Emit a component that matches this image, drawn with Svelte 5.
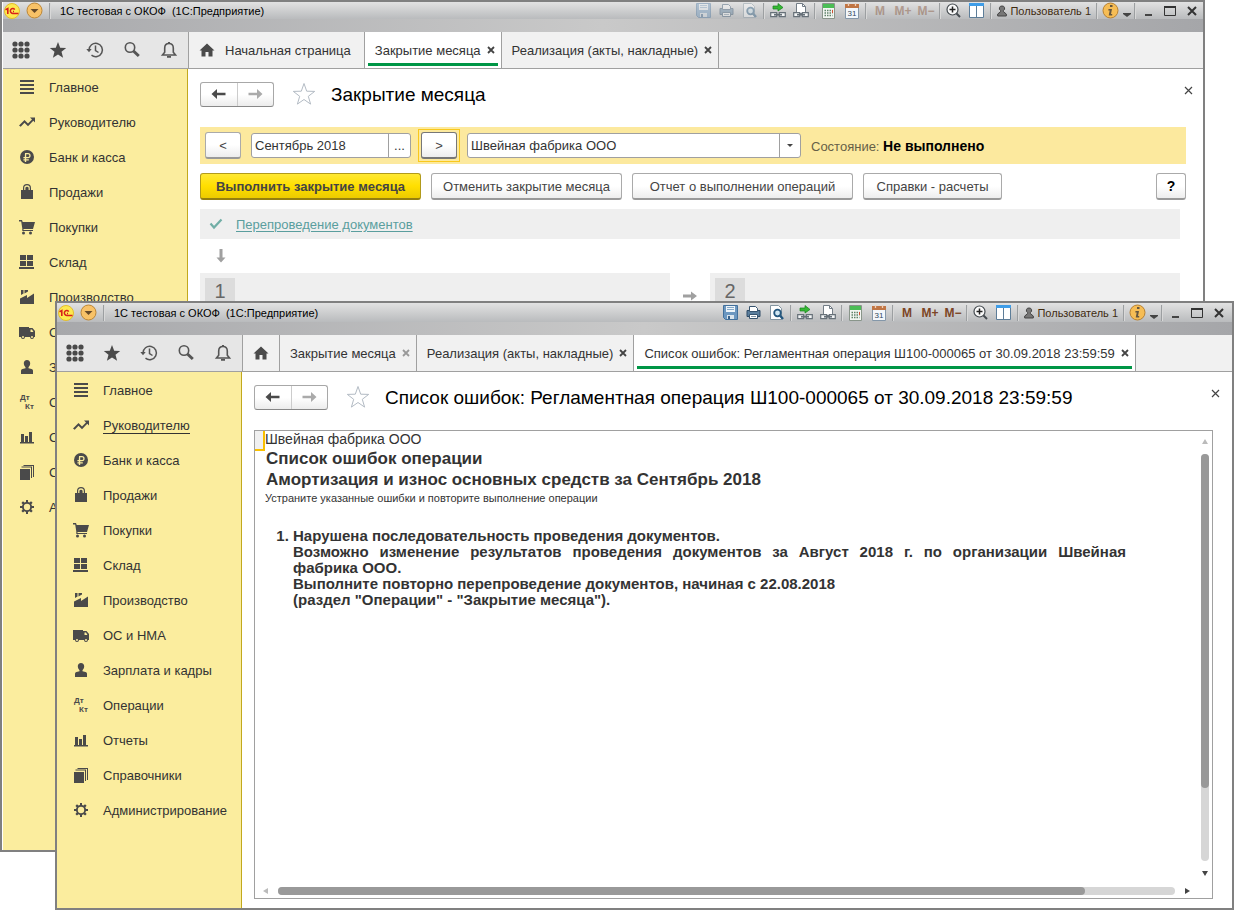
<script>
	const sections = [
		{ title: 'Главное', icon: 'M1 1h14v2H1z M1 5h14v2H1z M1 9h14v2H1z M1 13h14v2H1z' },
		{ title: 'Руководителю', icon: 'M0 11.5L5.5 6l3.5 3.5L13 5.4 11 3.500h5V8.500l-1.700-1.700L9 12.200 5.500 8.800 1.700 12.800z' },
		{ title: 'Банк и касса', icon: 'M8 1a7 7 0 1 0 0 14A7 7 0 1 0 8 1z M6 4h3a2.600 2.600 0 0 1 0 5.200H7.200v1h2.600v1.200H7.200V13H5.800v-1.600H4.400v-1.200h1.400v-1H4.400V8H5.800z M7.200 5.300V8H9a1.300 1.300 0 0 0 0-2.700z' },
		{ title: 'Продажи', icon: 'M2 6h2V4a3.500 3.500 0 0 1 8 0v2h2v9H2z M5.200 6h1.200V3.800a1.700 1.700 0 0 1 3.200 0V6h1.200V4a2.800 2.800 0 0 0-5.600 0z' },
		{ title: 'Покупки', icon: 'M0 1h3l.7 2H16l-2 7H4.500v1H14v1H3.300v-2.500L2.200 2.500H0z M3 14a1.500 1.500 0 1 1 3 0 1.500 1.500 0 1 1-3 0z M10 14a1.500 1.500 0 1 1 3 0 1.500 1.500 0 1 1-3 0z' },
		{ title: 'Склад', icon: 'M1 1h6v5H1z M8 1h6v5H8z M1 7h6v5H1z M8 7h6v5H8z M0 13h15v2H0z' },
		{ title: 'Производство', icon: 'M1 15V9.500L8 6v3l7-4.500V15z M2 1h2.500v3.500L2 6z M5.500 1H9v1.500L5.500 4.500z' },
		{ title: 'ОС и НМА', icon: 'M0 3h10v1h3.500L16 7v6h-1a2 2 0 0 1-4 0H6a2 2 0 0 1-4 0H0z M11.500 5.500V8h3L13 5.500z M3 13a1 1 0 1 0 2 0 1 1 0 1 0-2 0z M12 13a1 1 0 1 0 2 0 1 1 0 1 0-2 0z' },
		{ title: 'Зарплата и кадры', icon: 'M8 1c2 0 3.200 1.400 3.200 3.300 0 1.500-.7 3-1.700 3.900v1.100L12.500 10C13.500 10.300 14 11 14 12v3H2v-3c0-1 .5-1.700 1.500-2l3-.7V8.200C5.500 7.300 4.800 5.800 4.800 4.300 4.800 2.400 6 1 8 1z' },
		{ title: 'Операции', icon: null },
		{ title: 'Отчеты', icon: 'M1 13h14v1.500H1z M2 5h3v8H2z M6 7h3v6H6z M10 3h3v10h-3z' },
		{ title: 'Справочники', icon: 'M1 5h10v11H1z M2.500 2.500h10.500V14h-1V3.500H2.500z M4.500 1H15v12h-1V2H4.500z' },
		{ title: 'Администрирование', icon: 'M7 1h2v2l1.600.6L12 2.200 13.600 3.800 12.300 5.200 13 7h2v2h-2l-.7 1.600 1.400 1.400-1.600 1.600-1.500-1.300L9 13v2H7v-2l-1.600-.7L4 13.600 2.400 12l1.300-1.400L3 9H1V7h2l.7-1.700L2.400 3.900 4 2.300l1.400 1.300L7 3z M8 4.800a3.200 3.200 0 1 0 0 6.400 3.200 3.200 0 1 0 0-6.400z' }
	];

	const backTabs = [
		{ title: 'Начальная страница', home: true },
		{ title: 'Закрытие месяца', active: true, close: true },
		{ title: 'Реализация (акты, накладные)', close: true }
	];

	const frontTabs = [
		{ title: '', home: true },
		{ title: 'Закрытие месяца', close: true, dim: true },
		{ title: 'Реализация (акты, накладные)', close: true },
		{ title: 'Список ошибок: Регламентная операция Ш100-000065 от 30.09.2018 23:59:59', active: true, close: true }
	];

	let period = $state('Сентябрь 2018');
</script>

{#snippet titlebar(inactive)}
	<header class="titlebar">
		<div class="caption">
			<svg class="logo" width="16" height="16" viewBox="0 0 16 16">
				<circle cx="8" cy="8" r="7.500" fill="#fde94f" stroke="#e3bd2c" />
				<path d="M1.500 6.800L3.800 5.500V11" fill="none" stroke="#d8201c" stroke-width="1.600" />
				<path d="M10.700 6.600A2.400 2.400 0 1 0 8.700 10.400H14.500M10 8.600H9" fill="none" stroke="#d8201c" stroke-width="1.500" />
			</svg>
			<button class="system" aria-label="Главное меню">
				<svg width="17" height="17" viewBox="0 0 17 17">
					<circle cx="8.500" cy="8.500" r="7.500" fill="#f8c267" stroke="#bd8634" />
					<path d="M4.500 7h8l-4 4z" fill="#664a28" />
				</svg>
			</button>
			<i class="sep"></i>
			<span class="app">1С тестовая с ОКОФ&nbsp; (1С:Предприятие)</span>
			<div class="tools">
				<div class="group" class:inactive>
					<button aria-label="Сохранить"><svg width="15" height="15" viewBox="0 0 15 15"><path d="M.5.500h14v14H2.500l-2-2z" fill="#6c97c0" stroke="#42709c" /><path d="M3 1h9v6H3z" fill="#eef5fa" /><path d="M4 2.500h7M4 4.500h7" stroke="#86a9c8" /><path d="M4 10h7v4H4z" fill="#dbe5ed" /><path d="M5 11h2v3H5z" fill="#38618a" /></svg></button>
					<button aria-label="Печать"><svg width="15" height="15" viewBox="0 0 15 15"><path d="M1 5.500h13v6H1z" fill="#5b7f9e" stroke="#2e4b66" /><path d="M3.500 1.500h6l2 2v3h-8z" fill="#fff" stroke="#37546f" /><path d="M3.500 9.500h8v4h-8z" fill="#fff" stroke="#37546f" /><path d="M5 11.500h5" stroke="#8195a6" /></svg></button>
					<button aria-label="Предварительный просмотр"><svg width="15" height="15" viewBox="0 0 15 15"><path d="M1.500.500h8l3 3v11h-11z" fill="#fff" stroke="#8495a0" /><circle cx="8.500" cy="8" r="3.300" fill="#d2e8f3" stroke="#24577e" stroke-width="1.800" /><path d="M11 10.500l3 3.500" stroke="#24577e" stroke-width="2.400" /></svg></button>
				</div>
				<i class="sep"></i>
				<div class="group">
					<button aria-label="Перейти по ссылке"><svg width="16" height="16" viewBox="0 0 16 16"><path d="M3 3h5V.500L13 4.500 8 8V6H3z" fill="#36b834" stroke="#17811d" stroke-width=".7" /><path d="M.7 9.700h6v4h-6z M9.300 9.700h6v4h-6z" fill="#f2f4f5" stroke="#667078" stroke-width="1.200" /><path d="M4 11.700h8" stroke="#667078" stroke-width="1.700" /></svg></button>
					<button aria-label="Получить ссылку"><svg width="16" height="16" viewBox="0 0 16 16"><path d="M3.500.500h6l3 3v7h-9z" fill="#fff" stroke="#737d86" /><path d="M9.500.500v3h3" fill="none" stroke="#737d86" /><path d="M.7 9.700h6v4h-6z M9.300 9.700h6v4h-6z" fill="#f2f4f5" stroke="#667078" stroke-width="1.200" /><path d="M4 11.700h8" stroke="#667078" stroke-width="1.700" /></svg></button>
				</div>
				<i class="sep"></i>
				<div class="group">
					<button aria-label="Калькулятор"><svg width="13" height="16" viewBox="0 0 13 16"><path d="M.5.500h12v15H.5z" fill="#f3f6f2" stroke="#89958a" /><path d="M1 1h11v4H1z" fill="#4bbd55" /><path d="M2.500 7.500h8M2.500 10h8M2.500 12.500h8" stroke="#608269" stroke-width="1.400" stroke-dasharray="1.500 1" /><path d="M10.500 7v3" stroke="#d44f31" /></svg></button>
					<button aria-label="Календарь"><svg width="14" height="16" viewBox="0 0 14 16"><path d="M.5 2.500h13v13H.5z" fill="#f3f7fb" stroke="#8497a9" /><path d="M0 1h14v4H0z" fill="#c07544" /><path d="M3.500 0v3M10.500 0v3" stroke="#f0d0b8" stroke-width="1.300" /><text x="7" y="13" text-anchor="middle" font-size="8" fill="#30475e">31</text></svg></button>
				</div>
				<i class="sep"></i>
				<div class="group memory" class:inactive>
					<button>M</button>
					<button>M+</button>
					<button>M−</button>
				</div>
				<i class="sep"></i>
				<div class="group">
					<button aria-label="Масштаб"><svg width="15" height="15" viewBox="0 0 15 15"><circle cx="6.500" cy="6.500" r="5.500" fill="#fafafa" stroke="#454b50" stroke-width="1.200" /><path d="M3.500 6.500h6M6.500 3.500v6" stroke="#222" stroke-width="1.500" /><path d="M10.500 10.500l3.500 3.500" stroke="#454b50" stroke-width="2" /></svg></button>
					<button aria-label="Панели"><svg width="15" height="15" viewBox="0 0 15 15"><path d="M.5 1.500h14v13H.5z" fill="#fff" stroke="#5d7d98" /><path d="M0 0h15v3H0z" fill="#3f9de8" /><path d="M7.500 3v11.500" stroke="#5d7d98" /></svg></button>
				</div>
				<i class="sep"></i>
				<button class="user">
					<svg width="10" height="12" viewBox="0 0 10 12"><path d="M5 1a2.400 2.400 0 0 1 1.400 4.500v1.200L9.300 9v2H.7V9l2.900-2.300V5.500A2.400 2.400 0 0 1 5 1z" fill="#777" stroke="#444" /></svg>
					Пользователь 1
				</button>
				<i class="sep"></i>
				<button aria-label="О программе"><svg width="17" height="17" viewBox="0 0 17 17"><circle cx="8.500" cy="8.500" r="7.500" fill="#f6bd55" stroke="#b88131" /><path d="M8 3h2.500v2H8z M6.500 7H10l-1 5h1.200v1.500H6.700L7.700 8.500H6.300z" fill="#665740" /></svg></button>
				<svg class="caret" width="10" height="14" viewBox="0 0 10 14"><path d="M1 9h8v1L5 13 1 10z" fill="#444" /></svg>
				<i class="sep"></i>
				<button class="frame" aria-label="Свернуть"><svg width="12" height="12" viewBox="0 0 12 12"><path d="M3 9h7v2H3z" fill="#444" /></svg></button>
				<button class="frame" aria-label="Развернуть"><svg width="12" height="12" viewBox="0 0 12 12"><path d="M.5 1.500h11v9H.5z" fill="none" stroke="#333" /><path d="M0 1h12v2H0z" fill="#333" /></svg></button>
				<button class="frame" aria-label="Закрыть"><svg width="12" height="12" viewBox="0 0 12 12"><path d="M2 2l8 8M10 2l-8 8" stroke="#333" stroke-width="2" /></svg></button>
			</div>
		</div>
	</header>
{/snippet}

{#snippet tabbar(tabs)}
	<div class="tabbar">
		<div class="shortcuts">
			<button aria-label="Меню функций"><svg width="18" height="18" viewBox="0 0 18 18" fill="#4a4a4a">{#each [3, 9, 15] as cy}{#each [3, 9, 15] as cx}<circle {cx} {cy} r="2.600" />{/each}{/each}</svg></button>
			<button aria-label="Избранное"><svg width="18" height="18" viewBox="0 0 18 18"><path d="M9 1l2.200 5.700 6 .3-4.700 3.800 1.600 5.900L9 13.400l-5.100 3.300 1.600-5.900L.8 7l6-.3z" fill="#4a4a4a" /></svg></button>
			<button aria-label="История"><svg width="18" height="18" viewBox="0 0 18 18" fill="none" stroke="#555" stroke-width="1.500"><path d="M3 9a6.700 6.700 0 1 1 2.500 5.200M9.500 4.500v5l3 2" /><path d="M.3 8h5.400L3 11.300z" fill="#555" stroke="none" /></svg></button>
			<button aria-label="Поиск"><svg width="18" height="18" viewBox="0 0 18 18" fill="none" stroke="#555"><circle cx="7" cy="6.500" r="4.700" stroke-width="1.600" /><path d="M10.500 10l5.300 5" stroke-width="3" /></svg></button>
			<button aria-label="Оповещения"><svg width="18" height="18" viewBox="0 0 18 18"><path d="M2.500 14h13l-2.200-2.700V7c0-3-1.800-4.500-4.300-4.500S4.700 4 4.700 7v4.300z" fill="none" stroke="#555" stroke-width="1.600" /><path d="M8 1h2v2H8z M7 15h4v1.700H7z" fill="#555" /></svg></button>
		</div>
		<nav class="tabs">
			{#each tabs as tab}
				<div class="tab" class:active={tab.active} class:start={tab.home}>
					<button class="name" aria-label={tab.title || 'Начальная страница'}>
						{#if tab.home}
							<svg width="16" height="14" viewBox="0 0 16 14"><path d="M8 0.500L15.500 7.500H13.500V13.500H9.500V9H6.500v4.500H2.500V7.500H.5z" fill="#4a4a4a" /></svg>
						{/if}
						{#if tab.title}<span>{tab.title}</span>{/if}
					</button>
					{#if tab.close}
						<button class="close" class:dim={tab.dim} aria-label="Закрыть вкладку"><svg width="8" height="8" viewBox="0 0 8 8"><path d="M1 1l6 6M7 1L1 7" stroke="currentColor" stroke-width="1.800" /></svg></button>
					{/if}
				</div>
			{/each}
		</nav>
	</div>
{/snippet}

{#snippet sidebar(hovered)}
	<nav class="sidebar">
		{#each sections as section}
			<a href="#section" class:hovered={section.title === hovered}>
				<svg width="16" height="16" viewBox="0 0 16 16">
					{#if section.icon}
						<path d={section.icon} fill="#4a4a4a" fill-rule="evenodd" />
					{:else}
						<text x="1" y="6" class="dtkt">Дт</text>
						<text x="6" y="15" class="dtkt">Кт</text>
					{/if}
				</svg>
				<span>{section.title}</span>
			</a>
		{/each}
	</nav>
{/snippet}

{#snippet heading(title)}
	<div class="heading">
		<div class="history">
			<button aria-label="Назад"><svg width="15" height="12" viewBox="0 0 15 12"><path d="M.5 6L6 1v3.700h8.500v2.600H6V11z" fill="#4a4a4a" /></svg></button>
			<button aria-label="Вперед"><svg width="15" height="12" viewBox="0 0 15 12"><path d="M14.500 6L9 1v3.700H.5v2.600H9V11z" fill="#aaa" /></svg></button>
		</div>
		<button class="star" aria-label="В избранное"><svg width="24" height="24" viewBox="0 0 24 24"><path d="M12 1.500l2.700 7.700 8 .2-6.400 4.900 2.300 7.800L12 17.500l-6.600 4.600 2.300-7.800L1.300 9.400l8-.2z" fill="#fff" stroke="#b3bbc4" /></svg></button>
		<h1>{title}</h1>
		<button class="dismiss" aria-label="Закрыть"><svg width="9" height="9" viewBox="0 0 9 9"><path d="M1 1l7 7M8 1L1 8" stroke="#444" stroke-width="1.200" /></svg></button>
	</div>
{/snippet}

<main>
	<section class="window back">
		{@render titlebar(true)}
		{@render tabbar(backTabs)}
		<div class="body">
			{@render sidebar()}
			<div class="content">
				{@render heading('Закрытие месяца')}
				<div class="filter">
					<button class="btn step">&lt;</button>
					<div class="field period">
						<input aria-label="Период" bind:value={period}>
						<button aria-label="Выбрать период">...</button>
					</div>
					<button class="btn step focused">&gt;</button>
					<div class="field company">
						<select aria-label="Организация">
							<option>Швейная фабрика ООО</option>
						</select>
						<i class="arrow"></i>
					</div>
					<span class="state">Состояние: <b>Не выполнено</b></span>
				</div>
				<div class="commands">
					<button class="btn primary">Выполнить закрытие месяца</button>
					<button class="btn cancel">Отменить закрытие месяца</button>
					<button class="btn report">Отчет о выполнении операций</button>
					<button class="btn notes">Справки - расчеты</button>
					<button class="btn help">?</button>
				</div>
				<div class="repost">
					<svg width="14" height="12" viewBox="0 0 14 12"><path d="M1.500 5.500L5 9.500 12.500 1.500" fill="none" stroke="#71aea6" stroke-width="2.200" /></svg>
					<a href="#repost">Перепроведение документов</a>
				</div>
				<svg class="down" width="10" height="14" viewBox="0 0 10 14"><path d="M3.500 0h3v8.500H9.500L5 13.500.5 8.500h3z" fill="#a0a0a0" /></svg>
				<div class="stages">
					<div class="stage"><b>1</b></div>
					<svg width="14" height="10" viewBox="0 0 14 10"><path d="M0 3.500h8V.500L14 5 8 9.500v-3H0z" fill="#a0a0a0" /></svg>
					<div class="stage"><b>2</b></div>
				</div>
			</div>
		</div>
	</section>

	<section class="window front">
		{@render titlebar(false)}
		{@render tabbar(frontTabs)}
		<div class="body">
			{@render sidebar('Руководителю')}
			<div class="content">
				{@render heading('Список ошибок: Регламентная операция Ш100-000065 от 30.09.2018 23:59:59')}
				<div class="sheet">
					<div class="cell"></div>
					<article>
						<p class="firm">Швейная фабрика ООО</p>
						<h2>Список ошибок операции</h2>
						<h2>Амортизация и износ основных средств за Сентябрь 2018</h2>
						<p class="hint">Устраните указанные ошибки и повторите выполнение операции</p>
						<ol>
							<li>
								<p>Нарушена последовательность проведения документов.</p>
								<p>Возможно изменение результатов проведения документов за Август 2018 г. по организации Швейная фабрика&nbsp;ООО.</p>
								<p>Выполните повторно перепроведение документов, начиная с 22.08.2018</p>
								<p>(раздел "Операции" - "Закрытие месяца").</p>
							</li>
						</ol>
					</article>
					<div class="vscroll">
						<svg width="6" height="5" viewBox="0 0 6 5"><path d="M3 0l3 5H0z" fill="#bbb" /></svg>
						<div class="track"><div class="thumb"></div></div>
						<svg width="6" height="5" viewBox="0 0 6 5"><path d="M0 0h6L3 5z" fill="#444" /></svg>
					</div>
					<div class="hscroll">
						<svg width="5" height="6" viewBox="0 0 5 6"><path d="M5 0v6L0 3z" fill="#bbb" /></svg>
						<div class="track"><div class="thumb"></div></div>
						<svg width="5" height="6" viewBox="0 0 5 6"><path d="M0 0l5 3-5 3z" fill="#444" /></svg>
					</div>
				</div>
			</div>
		</div>
	</section>
</main>

<style>
	:global(body) {
		background: #fff;
		font-family: "Liberation Sans", Arial, sans-serif;
		font-size: 13px;
		color: #333;
	}

	main {
		position: relative;
		height: 100vh;
		min-height: 700px;
		overflow: hidden;
	}

	main :global(*) {
		box-sizing: border-box;
	}

	button, input, select {
		font: inherit;
		color: inherit;
		margin: 0;
		padding: 0;
		border: none;
		background: none;
	}

	svg {
		display: block;
		flex: none;
	}

	p, h1, h2, ol {
		margin: 0;
		padding: 0;
	}

	/* windows */
	.window {
		position: absolute;
		display: flex;
		flex-direction: column;
		overflow: hidden;
		border: 2px solid #808080;
		background: #fff;
	}

	.back {
		left: 0;
		right: 32px;
		top: 0;
		bottom: 60px;
		padding-left: 1px;
	}

	.front {
		left: 55px;
		right: 3px;
		top: 301px;
		bottom: 2px;
	}

	/* title bar */
	.titlebar {
		flex: none;
		height: 32px;
		background: linear-gradient(90deg, #a7a8ab, #c9c9c9 50%, #a5a6a9);
	}

	.back .titlebar {
		height: 30px;
	}

	.caption {
		display: flex;
		align-items: center;
		height: 19px;
		padding: 0 2px 0 1px;
		background: linear-gradient(#e2e2e2, #b9bbbd);
		color: #000;
		font-size: 11px;
	}

	.back .caption {
		height: 17px;
		padding-right: 0;
	}

	.system {
		margin: 0 4px 0 6px;
	}

	.sep {
		flex: none;
		width: 1px;
		height: 16px;
		margin: 0 2px;
		background: #9c9fa1;
		box-shadow: 1px 0 #d8d8d8;
	}

	.app {
		margin-left: 8px;
		white-space: nowrap;
	}

	.tools, .group {
		display: flex;
		align-items: center;
	}

	.tools {
		margin-left: auto;
	}

	.tools button {
		display: flex;
		align-items: center;
		justify-content: center;
		width: 23px;
		height: 17px;
	}

	.group.inactive {
		opacity: 0.4;
	}

	.tools .memory button {
		color: #7c4526;
		font-size: 12px;
		font-weight: bold;
	}

	.tools .user {
		width: auto;
		gap: 3px;
		padding: 0 3px 0 4px;
		color: #402b10;
		white-space: nowrap;
	}

	.tools .frame {
		width: 22px;
	}

	/* tab bar */
	.tabbar {
		display: flex;
		flex: none;
		height: 37px;
		border-bottom: 1px solid #a0a0a0;
		background: #f1f1f1;
	}

	.shortcuts {
		display: flex;
		flex: none;
		align-items: center;
		justify-content: space-between;
		width: 186px;
		padding: 0 10px 0 9px;
		border-right: 1px solid #a0a0a0;
		background: #e6e6e6;
	}

	.tabs {
		display: flex;
	}

	.tab {
		display: flex;
		align-items: center;
		padding: 0 6px 0 10px;
		border-right: 1px solid #a0a0a0;
		white-space: nowrap;
	}

	.tab.start {
		padding-right: 10px;
	}

	.back .tab.start {
		padding-right: 13px;
	}

	.tab.active {
		background: linear-gradient(#009646, #009646) center bottom 2px / calc(100% - 6px) 3px no-repeat #fff;
	}

	.name {
		display: flex;
		align-items: center;
		gap: 10px;
	}

	.close {
		margin-left: 6px;
		color: #444;
	}

	.close.dim {
		color: #999;
	}

	/* sections */
	.body {
		display: flex;
		flex: 1;
		min-height: 0;
	}

	.sidebar {
		flex: none;
		width: 185px;
		border-right: 1px solid #c2a91d;
		background: #fbed9e;
		overflow: hidden;
	}

	.sidebar a {
		display: flex;
		align-items: center;
		gap: 14px;
		height: 35px;
		padding: 1px 0 0 16px;
		color: #333;
		text-decoration: none;
		white-space: nowrap;
	}

	.sidebar .hovered span {
		border-bottom: 1px solid #333;
		margin-bottom: -1px;
	}

	.dtkt {
		font-size: 8px;
		font-weight: bold;
		fill: #4a4a4a;
	}

	.content {
		display: flex;
		flex: 1;
		flex-direction: column;
		min-width: 0;
		padding: 12px 19px 9px 12px;
	}

	/* form heading */
	.heading {
		display: flex;
		flex: none;
		align-items: center;
		height: 26px;
	}

	.history {
		display: flex;
		width: 74px;
		height: 25px;
		border: 1px solid #a8a8a8;
		border-bottom-color: #888;
		border-radius: 3px;
		background: linear-gradient(#fff 50%, #ececec);
	}

	.history button {
		display: flex;
		flex: 1;
		align-items: center;
		justify-content: center;
	}

	.history button + button {
		border-left: 1px solid #ccc;
	}

	.star {
		margin: 0 15px 0 18px;
	}

	h1 {
		padding-top: 2px;
		color: #000;
		font-size: 19px;
		font-weight: normal;
		line-height: 24px;
		white-space: nowrap;
	}

	.dismiss {
		margin: 0 -7px 8px auto;
	}

	/* month closing */
	.back .content {
		padding-right: 17px;
	}

	.filter {
		display: flex;
		flex: none;
		align-items: center;
		gap: 10px;
		height: 37px;
		margin-top: 20px;
		padding: 0 5px;
		background: #fce99e;
	}

	.btn {
		height: 27px;
		border: 1px solid #aaa;
		border-bottom: 2px solid #999;
		border-radius: 3px;
		background: linear-gradient(#fff 50%, #ededed);
		color: #444;
		white-space: nowrap;
	}

	.step {
		width: 36px;
	}

	.focused {
		position: relative;
		border-color: #777;
	}

	.focused::after {
		content: "";
		position: absolute;
		inset: -4px -4px -5px;
		border: 1px solid #f9c81c;
	}

	.field {
		display: flex;
		height: 25px;
		border: 1px solid #a0a0a0;
		border-radius: 3px;
		background: #fff;
	}

	.period {
		width: 160px;
	}

	.company {
		position: relative;
		width: 334px;
	}

	.field input {
		flex: 1;
		min-width: 0;
		padding-left: 3px;
	}

	.field button {
		width: 22px;
		border-left: 1px solid #a0a0a0;
	}

	.field select {
		flex: 1;
		padding-left: 3px;
		appearance: none;
	}

	.arrow {
		position: absolute;
		top: 0;
		right: 0;
		bottom: 0;
		width: 21px;
		border-left: 1px solid #a0a0a0;
		pointer-events: none;
	}

	.arrow::after {
		content: "";
		position: absolute;
		left: 7px;
		top: 10px;
		border: 3px solid transparent;
		border-top-color: #444;
	}

	.state {
		color: #665f47;
		white-space: nowrap;
	}

	.state b {
		color: #000;
		font-size: 14px;
	}

	.commands {
		display: flex;
		flex: none;
		gap: 10px;
		margin-top: 9px;
	}

	.primary {
		width: 221px;
		border-color: #b19a1b;
		border-bottom-color: #947f10;
		background: linear-gradient(#ffe833, #ffdf00 50%, #eccb00);
		font-weight: bold;
	}

	.cancel {
		width: 191px;
	}

	.report {
		width: 221px;
	}

	.notes {
		width: 139px;
	}

	.help {
		width: 30px;
		margin-left: auto;
		color: #000;
		font-size: 14px;
		font-weight: bold;
	}

	.repost {
		display: flex;
		flex: none;
		align-items: center;
		gap: 13px;
		height: 30px;
		margin: 9px 6px 0 0;
		padding-left: 9px;
		background: #efefef;
	}

	.repost a {
		color: #5a9e9e;
		text-underline-offset: 2px;
	}

	.down {
		margin: 10px 0 10px 16px;
	}

	.stages {
		display: flex;
		flex: 1;
		gap: 13px;
		margin-right: 6px;
	}

	.stages svg {
		margin-top: 18px;
	}

	.stage {
		flex: 1;
		padding: 5px;
		background: #efefef;
	}

	.stage b {
		display: block;
		width: 30px;
		background: #dcdcdc;
		color: #666;
		font-size: 20px;
		font-weight: normal;
		line-height: 26px;
		text-align: center;
	}

	/* report */
	.sheet {
		display: grid;
		flex: 1;
		grid-template-columns: 10px 1fr 14px;
		grid-template-rows: 1fr 14px;
		min-height: 0;
		margin-top: 20px;
		border: 1px solid #a0a0a0;
	}

	.cell {
		height: 20px;
		border-right: 2px solid #f9c000;
		border-bottom: 2px solid #f9c000;
		background: #f0f0f0;
	}

	article {
		min-width: 0;
		overflow: hidden;
	}

	.firm {
		font-size: 14px;
		line-height: 17px;
	}

	h2 {
		padding-left: 1px;
		font-size: 17px;
		line-height: 21px;
	}

	.hint {
		font-size: 11px;
		line-height: 16px;
	}

	ol {
		margin: 22px 72px 0 28px;
		font-size: 15px;
		font-weight: bold;
		line-height: 16px;
	}

	li p {
		text-align: justify;
	}

	.track {
		flex: 1;
		border-radius: 4px;
		background: #d6d6d6;
	}

	.thumb {
		border-radius: 4px;
		background: #999;
	}

	.vscroll {
		display: flex;
		flex-direction: column;
		align-items: center;
		gap: 10px;
		padding: 8px 0;
	}

	.vscroll .track {
		width: 8px;
	}

	.vscroll .thumb {
		height: 82%;
	}

	.hscroll {
		display: flex;
		grid-column: 1 / 3;
		align-items: center;
		gap: 10px;
		padding: 0 8px;
	}

	.hscroll .track {
		height: 8px;
	}

	.hscroll .thumb {
		width: 90%;
		height: 8px;
	}
</style>
